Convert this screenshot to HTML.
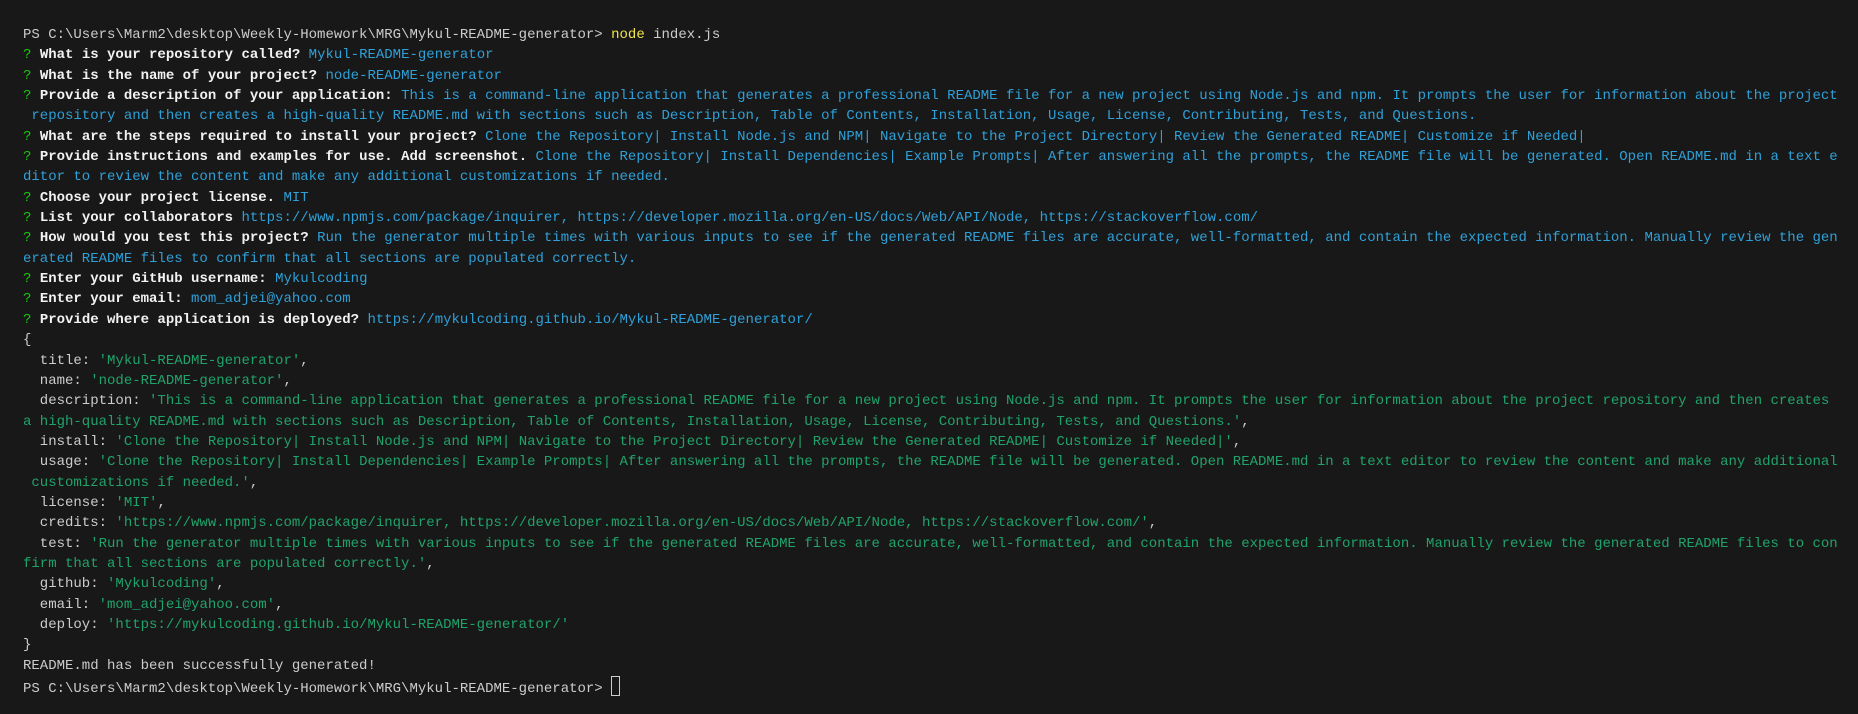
<!DOCTYPE html>
<html><head><meta charset="utf-8">
<style>
html,body{margin:0;padding:0;background:#181818;width:1858px;height:714px;overflow:hidden}
pre{margin:0;padding:25px 0 0 23px;font-family:"Liberation Mono","DejaVu Sans Mono",monospace;font-size:14px;line-height:20.35px;color:#cccccc;white-space:pre}
.q{color:#16c60c}
.b{color:#f2f2f2;font-weight:bold}
.a{color:#2fa0d8}
.s{color:#20a36b}
.y{color:#f0e54c}
.cur{display:inline-block;width:7px;height:18px;border:1px solid #cccccc;vertical-align:-4px}
</style></head><body>
<pre>PS C:\Users\Marm2\desktop\Weekly-Homework\MRG\Mykul-README-generator&gt; <span class="y">node</span> index.js
<span class="q">?</span> <span class="b">What is your repository called?</span> <span class="a">Mykul-README-generator</span>
<span class="q">?</span> <span class="b">What is the name of your project?</span> <span class="a">node-README-generator</span>
<span class="q">?</span> <span class="b">Provide a description of your application:</span> <span class="a">This is a command-line application that generates a professional README file for a new project using Node.js and npm. It prompts the user for information about the project
 repository and then creates a high-quality README.md with sections such as Description, Table of Contents, Installation, Usage, License, Contributing, Tests, and Questions.</span>
<span class="q">?</span> <span class="b">What are the steps required to install your project?</span> <span class="a">Clone the Repository| Install Node.js and NPM| Navigate to the Project Directory| Review the Generated README| Customize if Needed|</span>
<span class="q">?</span> <span class="b">Provide instructions and examples for use. Add screenshot.</span> <span class="a">Clone the Repository| Install Dependencies| Example Prompts| After answering all the prompts, the README file will be generated. Open README.md in a text e
ditor to review the content and make any additional customizations if needed.</span>
<span class="q">?</span> <span class="b">Choose your project license.</span> <span class="a">MIT</span>
<span class="q">?</span> <span class="b">List your collaborators</span> <span class="a">https://www.npmjs.com/package/inquirer, https://developer.mozilla.org/en-US/docs/Web/API/Node, https://stackoverflow.com/</span>
<span class="q">?</span> <span class="b">How would you test this project?</span> <span class="a">Run the generator multiple times with various inputs to see if the generated README files are accurate, well-formatted, and contain the expected information. Manually review the gen
erated README files to confirm that all sections are populated correctly.</span>
<span class="q">?</span> <span class="b">Enter your GitHub username:</span> <span class="a">Mykulcoding</span>
<span class="q">?</span> <span class="b">Enter your email:</span> <span class="a">mom_adjei@yahoo.com</span>
<span class="q">?</span> <span class="b">Provide where application is deployed?</span> <span class="a">https://mykulcoding.github.io/Mykul-README-generator/</span>
{
  title: <span class="s">'Mykul-README-generator'</span>,
  name: <span class="s">'node-README-generator'</span>,
  description: <span class="s">'This is a command-line application that generates a professional README file for a new project using Node.js and npm. It prompts the user for information about the project repository and then creates
a high-quality README.md with sections such as Description, Table of Contents, Installation, Usage, License, Contributing, Tests, and Questions.'</span>,
  install: <span class="s">'Clone the Repository| Install Node.js and NPM| Navigate to the Project Directory| Review the Generated README| Customize if Needed|'</span>,
  usage: <span class="s">'Clone the Repository| Install Dependencies| Example Prompts| After answering all the prompts, the README file will be generated. Open README.md in a text editor to review the content and make any additional
 customizations if needed.'</span>,
  license: <span class="s">'MIT'</span>,
  credits: <span class="s">'https://www.npmjs.com/package/inquirer, https://developer.mozilla.org/en-US/docs/Web/API/Node, https://stackoverflow.com/'</span>,
  test: <span class="s">'Run the generator multiple times with various inputs to see if the generated README files are accurate, well-formatted, and contain the expected information. Manually review the generated README files to con
firm that all sections are populated correctly.'</span>,
  github: <span class="s">'Mykulcoding'</span>,
  email: <span class="s">'mom_adjei@yahoo.com'</span>,
  deploy: <span class="s">'https://mykulcoding.github.io/Mykul-README-generator/'</span>
}
README.md has been successfully generated!
PS C:\Users\Marm2\desktop\Weekly-Homework\MRG\Mykul-README-generator&gt; <span class="cur"></span></pre>
</body></html>
